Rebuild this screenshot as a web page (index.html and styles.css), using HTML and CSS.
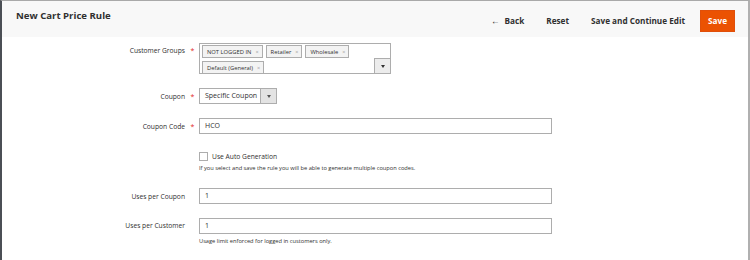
FILE: index.html
```html
<!DOCTYPE html>
<html>
<head>
<meta charset="utf-8">
<link rel="stylesheet" href="styles.css">
</head>
<body>
<div class="frame">
  <header class="page-header">
    <h1 class="title">New Cart Price Rule</h1>
    <div class="actions">
      <button class="act back"><span class="arrow">&#8592;</span>Back</button>
      <button class="act">Reset</button>
      <button class="act">Save and Continue Edit</button>
      <button class="save">Save</button>
    </div>
  </header>
  <main class="form">
    <div class="row row-groups">
      <label class="lbl">Customer Groups</label><span class="req">*</span>
      <div class="multi">
        <div class="tags">
          <span class="tag">NOT LOGGED IN <i>×</i></span>
          <span class="tag">Retailer <i>×</i></span>
          <span class="tag">Wholesale <i>×</i></span>
          <span class="tag">Default (General) <i>×</i></span>
        </div>
        <span class="multi-arrow"><span class="tri"></span></span>
      </div>
    </div>
    <div class="row row-coupon">
      <label class="lbl">Coupon</label><span class="req">*</span>
      <div class="select">
        <span class="sel-text">Specific Coupon</span>
        <span class="sel-arrow"><span class="tri"></span></span>
      </div>
    </div>
    <div class="row row-code">
      <label class="lbl">Coupon Code</label><span class="req">*</span>
      <div class="input">HCO</div>
    </div>
    <div class="row row-check">
      <span class="lbl"></span><span class="req"></span>
      <div class="check-wrap">
        <div class="check-line"><span class="box"></span><span class="check-text">Use Auto Generation</span></div>
        <div class="note">If you select and save the rule you will be able to generate multiple coupon codes.</div>
      </div>
    </div>
    <div class="row row-upc">
      <label class="lbl">Uses per Coupon</label><span class="req"></span>
      <div class="input">1</div>
    </div>
    <div class="row row-upcu">
      <label class="lbl">Uses per Customer</label><span class="req"></span>
      <div class="ctrl-col">
        <div class="input">1</div>
        <div class="note note2">Usage limit enforced for logged in customers only.</div>
      </div>
    </div>
  </main>
</div>
</body>
</html>
```

FILE: styles.css
```css
html, body {
  margin: 0;
  padding: 0;
  background: #ffffff;
}
body {
  font-family: "Open Sans", "Liberation Sans", sans-serif;
  color: #303030;
}
.frame {
  width: 750px;
  height: 260px;
  box-sizing: border-box;
  border-top: 1px solid #a9a9a9;
  border-left: 2px solid #4b4f55;
  border-right: 2px solid #b0b0b0;
  overflow: hidden;
  background: #fff;
}
.page-header {
  height: 36px;
  background: #f8f8f8;
  display: flex;
  align-items: center;
  justify-content: space-between;
  padding: 0 13px 0 14px;
}
.title {
  margin: 0 0 7px 0;
  font-size: 9.6px;
  font-weight: 700;
  color: #303030;
}
.actions {
  display: flex;
  align-items: center;
  margin-top: 3px;
}
.act {
  border: 0;
  background: transparent;
  font-family: inherit;
  font-weight: 700;
  font-size: 8.2px;
  color: #303030;
  padding: 0;
  margin-right: 22px;
  white-space: nowrap;
}
.act.back { margin-right: 22px; }
.arrow {
  font-weight: 400;
  margin-right: 5px;
  font-size: 8.5px;
}
.save {
  width: 35px;
  height: 22px;
  border: 1px solid #e04f0a;
  background: #eb5202;
  color: #fff;
  font-family: inherit;
  font-weight: 700;
  font-size: 8.2px;
  padding: 0;
  margin-left: -7px;
}
.form {
  display: flex;
  flex-direction: column;
}
.row {
  display: flex;
  align-items: flex-start;
}
.lbl {
  width: 183px;
  text-align: right;
  font-size: 6.7px;
  color: #303030;
  flex: none;
  white-space: nowrap;
}
.req {
  width: 13px;
  flex: none;
  color: #e22626;
  font-size: 7px;
  text-align: center;
  padding-left: 1px;
}
.row-groups { margin-top: 6px; }
.row-groups .lbl, .row-groups .req { line-height: 16px; margin-top: 0; }
.multi {
  width: 190px;
  height: 29px;
  border: 1px solid #adadad;
  position: relative;
  box-sizing: content-box;
}
.tags {
  display: flex;
  flex-wrap: wrap;
  gap: 3px 3px;
  padding: 1px 0 0 2px;
  width: 160px;
}
.tag {
  display: inline-flex;
  align-items: center;
  height: 11px;
  border: 1px solid #adadad;
  background: #f3f3f3;
  font-size: 5.8px;
  padding: 0 3px 0 4px;
  color: #303030;
  white-space: nowrap;
}
.tag i {
  font-style: normal;
  color: #a0a0a0;
  font-size: 5.5px;
  margin-left: 4px;
}
.multi-arrow {
  position: absolute;
  right: 0;
  bottom: 0;
  width: 15px;
  height: 14px;
  border-left: 1px solid #adadad;
  border-top: 1px solid #adadad;
  background: #ececec;
  display: flex;
  align-items: center;
  justify-content: center;
}
.tri {
  width: 0;
  height: 0;
  border-left: 2.5px solid transparent;
  border-right: 2.5px solid transparent;
  border-top: 3px solid #303030;
}
.row-coupon { margin-top: 14px; align-items: center; }
.select {
  display: flex;
  align-items: stretch;
  height: 14px;
  border: 1px solid #adadad;
}
.sel-text {
  font-size: 7px;
  line-height: 14px;
  padding: 0 5px 0 5px;
  width: 50px;
  white-space: nowrap;
}
.sel-arrow {
  width: 15px;
  border-left: 1px solid #adadad;
  background: #e3e3e3;
  display: flex;
  align-items: center;
  justify-content: center;
}
.sel-arrow .tri { border-top-color: #555; }
.row-code { margin-top: 14px; align-items: center; }
.input {
  width: 346px;
  height: 14px;
  border: 1px solid #adadad;
  font-size: 7px;
  line-height: 14px;
  padding-left: 5px;
  color: #303030;
}
.row-check { margin-top: 18px; }
.check-line { display: flex; align-items: center; }
.box {
  width: 7px;
  height: 7px;
  border: 1px solid #adadad;
  background: #fff;
  margin-right: 4px;
}
.check-text { font-size: 6.7px; line-height: 9px; }
.note {
  font-size: 5.7px;
  margin-top: 3px;
  color: #303030;
  white-space: nowrap;
}
.row-upc { margin-top: 16px; align-items: center; }
.row-upcu { margin-top: 14px; }
.row-upcu .lbl { line-height: 16px; }
.note2 { margin-top: 3px; }
```
